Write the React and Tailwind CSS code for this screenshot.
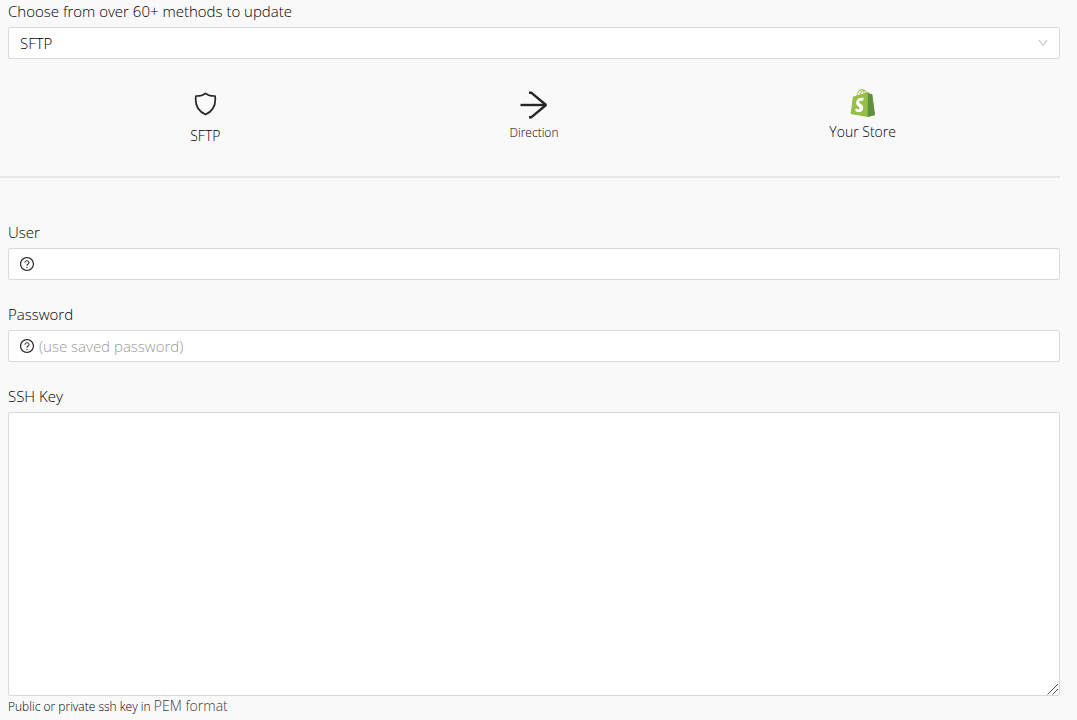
/**
 * SftpSettings - connection form for the SFTP update method
 *
 * - Update method picker
 * - Source / direction / destination summary
 * - Credentials
 */
import { useState } from 'react';
import { AiOutlineDown, AiOutlineQuestionCircle } from 'react-icons/ai';

const METHODS = ['SFTP', 'FTP', 'Dropbox', 'Google Drive', 'Email'];

function ShieldIcon() {
  return (
    <svg className="w-6 h-6 text-[#262626]" viewBox="0 0 24 24" fill="none" stroke="currentColor" strokeWidth="1.7" strokeLinejoin="round" aria-hidden="true">
      <path d="M12.500 1.300C9.800 3.500 6.300 4.100 2.900 4C1.800 12.300 4.500 18.800 12.500 22.600C20.500 18.800 23.200 12.300 22.100 4C18.700 4.100 15.200 3.500 12.500 1.300z" />
    </svg>
  );
}

function ArrowIcon() {
  return (
    <svg className="w-7 h-7 text-[#262626]" viewBox="0 0 28 28" fill="none" stroke="currentColor" strokeWidth="2.4" aria-hidden="true">
      <path d="M0.5 14H26" />
      <path d="M9 1.800H11.500L26 14L11.500 26.200H9" strokeLinejoin="bevel" />
    </svg>
  );
}

function ShopifyIcon() {
  return (
    <svg className="w-7 h-7" viewBox="0 0 109.5 124.5" aria-hidden="true">
      <path
        fill="#95bf47"
        d="M95.9 23.9c-.1-.6-.6-1-1.1-1s-9.3-.2-9.3-.2-7.4-7.2-8.1-7.9c-.7-.7-2.2-.5-2.7-.3 0 0-1.4.4-3.7 1.1-.4-1.3-1-2.8-1.8-4.4-2.6-5-6.5-7.7-11.1-7.7-.3 0-.6 0-1 .1-.1-.2-.3-.3-.4-.5-2-2.2-4.6-3.2-7.7-3.1-6 .2-12 4.5-16.8 12.2-3.4 5.4-6 12.2-6.7 17.5-6.9 2.1-11.7 3.6-11.8 3.7-3.5 1.1-3.6 1.2-4 4.5C9.1 40.7 0 111.2 0 111.2l75.6 13.1 32.9-8.2S96 24.500 95.900 23.900zM67.200 16.800c-1.700.5-3.700 1.100-5.900 1.800 0-3-.4-7.300-1.800-10.900 4.500.9 6.700 6 7.700 9.100zM57.200 19.900c-4 1.200-8.400 2.600-12.700 3.900 1.200-4.700 3.600-9.400 6.400-12.500 1.100-1.100 2.600-2.400 4.300-3.200 1.700 3.600 2.100 8.500 2 11.800zM49.100 4c1.400 0 2.600.3 3.600.9-1.600.8-3.200 2.100-4.700 3.600-3.800 4.100-6.700 10.500-7.900 16.600-3.600 1.100-7.200 2.200-10.500 3.200C31.700 18.800 39.800 4.300 49.100 4z"
      />
      <path
        fill="#5e8e3e"
        d="M94.800 22.900c-.5 0-9.300-.2-9.300-.2s-7.400-7.200-8.100-7.900c-.3-.3-.6-.4-1-.5L75.600 124.300l32.900-8.200S96 24.500 95.900 23.900c-.1-.6-.6-1-1.100-1z"
      />
      <path
        fill="#fff"
        d="M58 39.900l-3.800 14.400s-4.300-2-9.400-1.600c-7.500.5-7.500 5.200-7.400 6.400.4 6.400 17.300 7.800 18.300 22.900.7 11.900-6.300 20-16.400 20.600-12.200.8-18.900-6.400-18.900-6.400l2.600-11s6.700 5.100 12.100 4.700c3.500-.2 4.800-3.100 4.700-5.100-.5-8.400-14.300-7.900-15.200-21.700-.7-11.600 6.900-23.400 23.700-24.500 6.500-.4 9.700 1.300 9.700 1.300z"
      />
    </svg>
  );
}

/**
 * Single line input with a help icon in front
 */
function PrefixedInput({ id, label, ...inputProps }) {
  return (
    <div>
      <label htmlFor={id} className="block mb-1.5">{label}</label>
      <div className="flex items-center gap-1 h-8 px-2.5 bg-white border border-[#d9d9d9] rounded-xs">
        <AiOutlineQuestionCircle className="w-4 h-4 shrink-0 text-[#262626]" />
        <input
          id={id}
          className="flex-1 min-w-0 bg-transparent outline-none placeholder:text-[#999]"
          {...inputProps}
        />
      </div>
    </div>
  );
}

export default function App() {
  const [method, setMethod] = useState('SFTP');
  const [user, setUser] = useState('');
  const [password, setPassword] = useState('');
  const [sshKey, setSshKey] = useState('');

  return (
    <div className="min-h-screen bg-[#f9f9f9] text-black pt-px pr-[17px] font-['Open_Sans',sans-serif] font-light text-[15px]/[20px]">
      {/* Method picker */}
      <div className="pl-2">
        <label htmlFor="method" className="block mb-1.5">Choose from over 60+ methods to update</label>
        <div className="grid items-center">
          <select
            id="method"
            value={method}
            onChange={(e) => setMethod(e.target.value)}
            className="col-start-1 row-start-1 appearance-none w-full h-8 px-[11px] bg-white border border-[#d9d9d9] rounded-xs outline-none"
          >
            {METHODS.map((name) => (
              <option key={name}>{name}</option>
            ))}
          </select>
          <AiOutlineDown className="col-start-1 row-start-1 justify-self-end mr-[11px] w-3 h-3 text-[#bfbfbf] pointer-events-none" />
        </div>
      </div>

      {/* Source, direction, destination */}
      <div className="grid grid-cols-3 pl-[41px] pr-[33px] py-[30px] text-sm/[22px]">
        <div className="flex flex-col items-center gap-2 pt-[3px]">
          <ShieldIcon />
          <span className="leading-6">{method}</span>
        </div>
        <div className="flex flex-col items-center gap-1 pt-0.5">
          <ArrowIcon />
          <span className="text-xs/[20px]">Direction</span>
        </div>
        <div className="flex flex-col items-center gap-1">
          <ShopifyIcon />
          <span>Your Store</span>
        </div>
      </div>
      <hr className="-mt-0.5 border-t-2 border-[#e8e8e8]" />

      {/* Credentials */}
      <form className="flex flex-col gap-6 pl-2 pt-11" onSubmit={(e) => e.preventDefault()}>
        <PrefixedInput
          id="user"
          label="User"
          type="text"
          value={user}
          onChange={(e) => setUser(e.target.value)}
        />
        <PrefixedInput
          id="password"
          label="Password"
          type="password"
          placeholder="(use saved password)"
          value={password}
          onChange={(e) => setPassword(e.target.value)}
        />
        <div>
          <label htmlFor="ssh-key" className="block mb-1.5">SSH Key</label>
          <div className="relative">
            <textarea
              id="ssh-key"
              value={sshKey}
              onChange={(e) => setSshKey(e.target.value)}
              className="block w-full h-[284px] px-[11px] py-1 bg-white border border-[#d9d9d9] rounded-xs outline-none resize-y [&::-webkit-resizer]:bg-transparent"
            />
            {/* Resize grip */}
            <svg className="absolute right-px bottom-px w-3 h-3 pointer-events-none" viewBox="0 0 12 12" fill="none" stroke="#555" aria-hidden="true">
              <path d="M0.500 11.500L11 1M5.500 11.500L11 6" />
            </svg>
          </div>
          <p className="text-xs/[20px]">
            Public or private ssh key in{' '}
            <a href="#pem" className="text-sm/[20px] text-[#404040]">PEM format</a>
          </p>
        </div>
      </form>
    </div>
  );
}
